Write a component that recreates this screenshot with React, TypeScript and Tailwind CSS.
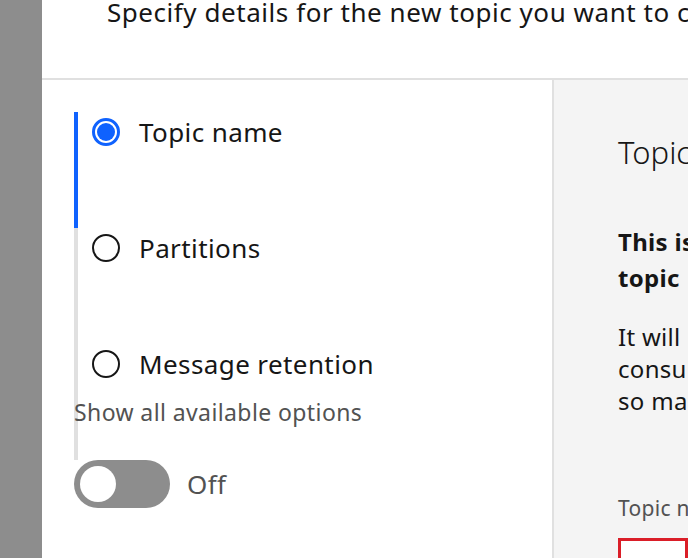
import React from 'react';

const STEPS = [
  { label: 'Topic name', current: true },
  { label: 'Partitions', current: false },
  { label: 'Message retention', current: false },
];

function Radio({ checked }: { checked: boolean }) {
  if (checked) {
    return (
      <span className="w-[28px] h-[28px] shrink-0 rounded-full border-[3px] border-[#0f62fe] bg-white flex items-center justify-center">
        <span className="w-[18px] h-[18px] rounded-full bg-[#0f62fe]" />
      </span>
    );
  }
  return <span className="w-[28px] h-[28px] shrink-0 rounded-full border-2 border-[#161616] bg-white" />;
}

export default function App() {
  return (
    <div
      className="flex h-[558px] w-[688px] overflow-hidden text-[#161616]"
      style={{ fontFamily: '"Noto Sans", "Open Sans", sans-serif' }}
    >
      {/* backdrop strip */}
      <div className="w-[42px] shrink-0 bg-[#8d8d8d]" />

      <div className="flex-1 min-w-0 flex flex-col bg-white">
        {/* header */}
        <div className="h-[80px] shrink-0 overflow-hidden border-b-2 border-[#e0e0e0] pl-[65px]">
          <p className="-mt-[4px] whitespace-nowrap text-[26px] leading-[32px] tracking-[0.55px]">
            Specify details for the new topic you want to create
          </p>
        </div>

        <div className="flex flex-1 min-h-0">
          {/* progress column */}
          <div className="w-[510px] shrink-0 pl-[32px] pt-[32px]">
            <ul className="flex flex-col">
              {STEPS.map((s) => (
                <li
                  key={s.label}
                  className={`h-[116px] border-l-4 pl-[14px] pt-[6px] flex items-start gap-[19px] ${
                    s.current ? 'border-[#0f62fe]' : 'border-[#e0e0e0]'
                  }`}
                >
                  <Radio checked={s.current} />
                  <span className="text-[26px] leading-[28px] tracking-[0.4px]">{s.label}</span>
                </li>
              ))}
            </ul>
            <p className="-mt-[62px] h-[62px] text-[23px] leading-[28px] tracking-[0.4px] text-[#525252]">
              Show all available options
            </p>
            <div className="flex items-center gap-[17px]">
              <span className="w-[96px] h-[48px] rounded-full bg-[#8d8d8d] flex items-center px-[6px]">
                <span className="w-[36px] h-[36px] rounded-full bg-white" />
              </span>
              <span className="text-[26px] tracking-[0.4px] text-[#525252]">Off</span>
            </div>
          </div>

          {/* info panel */}
          <div className="flex-1 min-w-0 overflow-hidden bg-[#f4f4f4] border-l-2 border-[#e0e0e0] pl-[64px] pt-[52px] whitespace-nowrap">
            <h2 className="text-[31px] leading-[40px] font-light">Topic name</h2>
            <p className="mt-[52px] text-[24px] leading-[36px] font-bold tracking-[0.3px]">
              This is the name of your
              <br />
              topic
            </p>
            <p className="mt-[25px] text-[24px] leading-[32px] tracking-[0.3px]">
              It will be visible to
              <br />
              consumers and producers
              <br />
              so make it descriptive
            </p>
            <p className="mt-[77px] text-[21px] leading-[28px] tracking-[0.3px] text-[#525252]">Topic name</p>
            <div className="mt-[16px] h-[48px] border-[3px] border-[#da1e28] bg-white" />
          </div>
        </div>
      </div>
    </div>
  );
}
